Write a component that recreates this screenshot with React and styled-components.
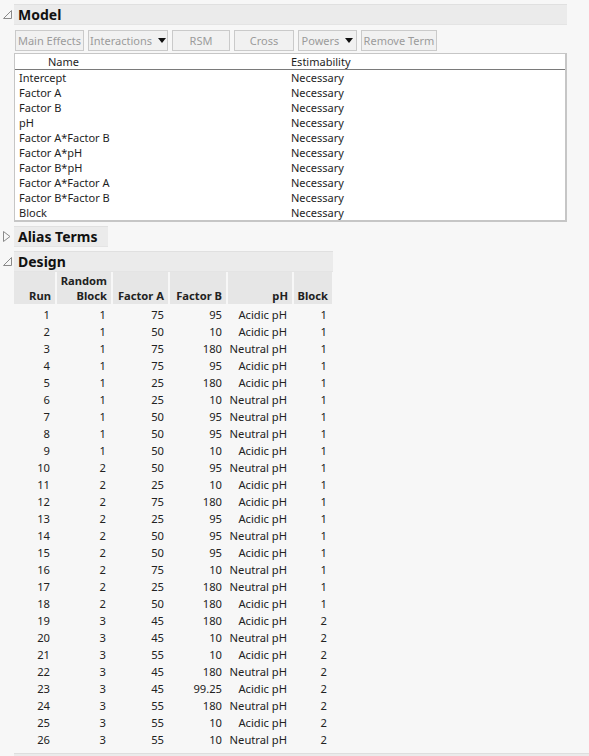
import React from "react";
import styled, { createGlobalStyle } from "styled-components";

const GlobalStyle = createGlobalStyle`
  html, body {
    margin: 0;
    padding: 0;
    background: #f7f7f7;
  }
  body {
    font-family: "Noto Sans", "Open Sans", sans-serif;
    font-size: 11.2px;
    color: #1e1e1e;
  }
`;

const terms = [
  "Intercept",
  "Factor A",
  "Factor B",
  "pH",
  "Factor A*Factor B",
  "Factor A*pH",
  "Factor B*pH",
  "Factor A*Factor A",
  "Factor B*Factor B",
  "Block",
];

const runs = [
  [1, 1, 75, 95, "Acidic pH", 1],
  [2, 1, 50, 10, "Acidic pH", 1],
  [3, 1, 75, 180, "Neutral pH", 1],
  [4, 1, 75, 95, "Acidic pH", 1],
  [5, 1, 25, 180, "Acidic pH", 1],
  [6, 1, 25, 10, "Neutral pH", 1],
  [7, 1, 50, 95, "Neutral pH", 1],
  [8, 1, 50, 95, "Neutral pH", 1],
  [9, 1, 50, 10, "Acidic pH", 1],
  [10, 2, 50, 95, "Neutral pH", 1],
  [11, 2, 25, 10, "Acidic pH", 1],
  [12, 2, 75, 180, "Acidic pH", 1],
  [13, 2, 25, 95, "Acidic pH", 1],
  [14, 2, 50, 95, "Neutral pH", 1],
  [15, 2, 50, 95, "Acidic pH", 1],
  [16, 2, 75, 10, "Neutral pH", 1],
  [17, 2, 25, 180, "Neutral pH", 1],
  [18, 2, 50, 180, "Acidic pH", 1],
  [19, 3, 45, 180, "Acidic pH", 2],
  [20, 3, 45, 10, "Neutral pH", 2],
  [21, 3, 55, 10, "Acidic pH", 2],
  [22, 3, 45, 180, "Neutral pH", 2],
  [23, 3, 45, "99.25", "Acidic pH", 2],
  [24, 3, 55, 180, "Neutral pH", 2],
  [25, 3, 55, 10, "Acidic pH", 2],
  [26, 3, 55, 10, "Neutral pH", 2],
];

const Page = styled.div`
  padding-top: 4px;
`;

const Node = styled.section`
  display: grid;
  grid-template-columns: 14px auto;
  justify-content: start;
  margin-bottom: ${(p) => p.$gap || 0}px;
`;

const Gutter = styled.div`
  display: flex;
  align-items: center;
  justify-content: center;
  height: 21px;
`;

const TitleBar = styled.div`
  height: 21px;
  box-sizing: border-box;
  width: ${(p) => (p.$w ? `${p.$w}px` : "auto")};
  padding: 0 10px 0 4px;
  background: #ebebeb;
  border-top: 1px solid #e0e0e0;
  border-bottom: 1px solid #e4e4e4;
  font-weight: 700;
  font-size: 14px;
  line-height: 19px;
  color: #111;
  white-space: nowrap;
`;

const Body = styled.div`
  grid-column: 2;
`;

const Toolbar = styled.div`
  display: flex;
  gap: 4px;
  margin: 5px 0 2px 1px;
`;

const ToolButton = styled.div`
  width: ${(p) => p.$w}px;
  height: 21px;
  box-sizing: border-box;
  border: 1px solid #cacaca;
  background: #f1f1f1;
  color: #9b9b9b;
  font-size: 11px;
  display: flex;
  align-items: center;
  justify-content: center;
  gap: 6px;
  white-space: nowrap;
`;

const Caret = styled.span`
  width: 0;
  height: 0;
  border-left: 4px solid transparent;
  border-right: 4px solid transparent;
  border-top: 5px solid #111;
`;

const TermBox = styled.div`
  width: 553px;
  box-sizing: border-box;
  background: #fff;
  border: 1px solid #c6c6c6;
  border-right-width: 2px;
  border-bottom-width: 2px;
`;

const TermRow = styled.div`
  display: grid;
  grid-template-columns: 272px auto;
  height: 15px;
  line-height: 15px;
  font-size: 11px;
  padding-left: 4px;
  ${(p) =>
    p.$head &&
    `
    border-bottom: 1px solid #7a7a7a;
    padding-left: 33px;
    grid-template-columns: 243px auto;
  `}
`;

const DesignGrid = styled.div`
  display: grid;
  grid-template-columns: 41px 54px 55px 56px 64px 38px;
  column-gap: 2px;
  width: 319px;
`;

const HeadCell = styled.div`
  background: #e6e6e6;
  height: 32px;
  margin-bottom: 2px;
  box-sizing: border-box;
  display: flex;
  align-items: flex-end;
  justify-content: flex-end;
  text-align: right;
  padding: 0 4px 1px 0;
  font-weight: 700;
  font-size: 11.2px;
  line-height: 15px;
  color: #222;
  white-space: nowrap;
`;

const Cell = styled.div`
  height: 17px;
  line-height: 17px;
  text-align: right;
  padding-right: ${(p) => p.$pr ?? 5}px;
  color: #222;
  white-space: nowrap;
`;

const NextBar = styled.div`
  margin: 5px 0 0 14px;
  height: 10px;
  background: #ebebeb;
  border-top: 1px solid #dedede;
`;

const Toggle = ({ open }) =>
  open ? (
    <svg width="9" height="9" viewBox="0 0 9 9">
      <path d="M8.5 0.5 L8.5 8.5 L0.5 8.5 Z" fill="none" stroke="#8a8a8a" strokeWidth="1" />
    </svg>
  ) : (
    <svg width="8" height="11" viewBox="0 0 8 11">
      <path d="M0.5 0.5 L7 5.5 L0.5 10.5 Z" fill="none" stroke="#8a8a8a" strokeWidth="1" />
    </svg>
  );

const pads = [5, 5, 4, 4, 5, 5];

export default function App() {
  return (
    <Page>
      <GlobalStyle />
      <Node $gap={4}>
        <Gutter>
          <Toggle open />
        </Gutter>
        <TitleBar $w={553}>Model</TitleBar>
        <Body>
          <Toolbar>
            <ToolButton $w={69}>Main Effects</ToolButton>
            <ToolButton $w={80}>
              Interactions <Caret />
            </ToolButton>
            <ToolButton $w={58}>RSM</ToolButton>
            <ToolButton $w={60}>Cross</ToolButton>
            <ToolButton $w={59}>
              Powers <Caret />
            </ToolButton>
            <ToolButton $w={76}>Remove Term</ToolButton>
          </Toolbar>
          <TermBox>
            <TermRow $head>
              <span>Name</span>
              <span>Estimability</span>
            </TermRow>
            {terms.map((t) => (
              <TermRow key={t}>
                <span>{t}</span>
                <span>Necessary</span>
              </TermRow>
            ))}
          </TermBox>
        </Body>
      </Node>
      <Node $gap={4}>
        <Gutter>
          <Toggle />
        </Gutter>
        <TitleBar>Alias Terms</TitleBar>
      </Node>
      <Node>
        <Gutter>
          <Toggle open />
        </Gutter>
        <TitleBar $w={319}>Design</TitleBar>
        <Body>
          <DesignGrid>
            <HeadCell>Run</HeadCell>
            <HeadCell>
              Random
              <br />
              Block
            </HeadCell>
            <HeadCell>Factor A</HeadCell>
            <HeadCell>Factor B</HeadCell>
            <HeadCell>pH</HeadCell>
            <HeadCell>Block</HeadCell>
            {runs.map((r) =>
              r.map((v, i) => (
                <Cell key={`${r[0]}-${i}`} $pr={pads[i]}>
                  {v}
                </Cell>
              ))
            )}
          </DesignGrid>
        </Body>
      </Node>
      <NextBar />
    </Page>
  );
}
